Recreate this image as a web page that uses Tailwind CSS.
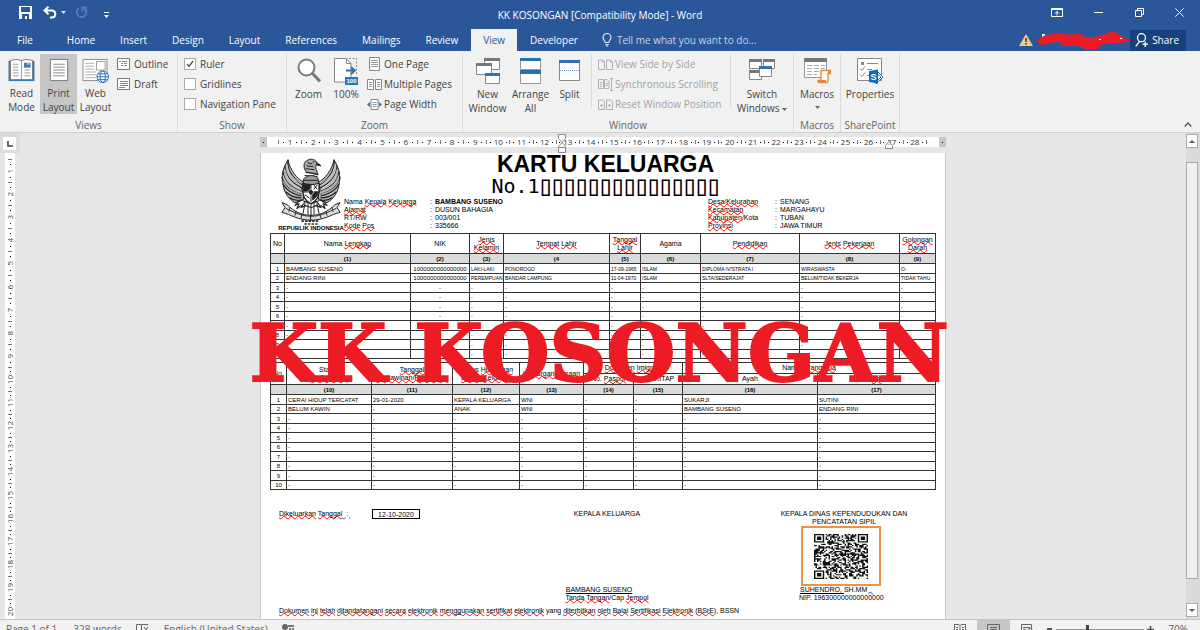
<!DOCTYPE html>
<html lang="en">
<head>
<meta charset="utf-8">
<meta name="viewport" content="width=device-width, initial-scale=1">
<title>KK KOSONGAN [Compatibility Mode] - Word</title>
<script src="https://cdn.jsdelivr.net/npm/@tailwindcss/browser@4"></script>
</head>
<body class="flex h-screen flex-col overflow-hidden bg-[#e6e6e6] font-['Open_Sans','Noto_Sans',sans-serif] text-[10px] leading-[14px] text-[#444]">

<!-- Title bar -->
<header class="shrink-0 bg-[#2a579a] text-white">
  <div class="grid h-[29px] grid-cols-[1fr_auto_1fr] items-center">
    <div class="flex items-center gap-[11px] pb-1 pl-[19px]">
      <button type="button" aria-label="Save"><svg class="block h-[13px] w-[13px]" viewBox="0 0 13 13"><path d="M0 0h13v13H0z" fill="#fff"/><path d="M2 1h9v5H2zM3 8h7v5H8v-3H6v3H3z" fill="#2a579a"/></svg></button>
      <div class="flex items-center gap-1">
        <button type="button" aria-label="Undo"><svg class="block h-[13px] w-[14px]" viewBox="0 0 14 13" fill="none" stroke="#fff" stroke-width="2"><path d="M5.500.700 1.500 4.500 5.500 8.300M2 4.500h6.500c5 0 5 7 0 7H7"/></svg></button>
        <button type="button" aria-label="Undo list"><svg class="block h-[3px] w-[5px]" viewBox="0 0 5 3"><path d="M0 0h5L2.500 3z" fill="#dbe4f2"/></svg></button>
        <button type="button" aria-label="Redo" class="ml-[5px]"><svg class="block h-[13px] w-[13px]" viewBox="0 0 13 13" fill="none" stroke="#5b7db3" stroke-width="1.800"><path d="M4 2.200A4.800 4.800 0 1 0 9.500 2.500M7.500 5.500V1.500h4"/></svg></button>
      </div>
      <button type="button" aria-label="Customize toolbar" class="mt-1 ml-[5px]"><svg class="block h-[6px] w-[5px]" viewBox="0 0 5 6"><path d="M0 0h5v1H0zM0 3h5L2.500 6z" fill="#fff"/></svg></button>
    </div>
    <h1>KK KOSONGAN [Compatibility Mode] - Word</h1>
    <div class="flex items-center justify-end pr-4 pb-1">
      <button type="button" aria-label="Ribbon display options"><svg class="block h-[9px] w-3" viewBox="0 0 12 9"><path d="M.500.500h11v8H.500zM.500 1.500h11M6 7.500v-4M4 5.500 6 3.500l2 2" fill="none" stroke="#fff"/></svg></button>
      <button type="button" aria-label="Minimize" class="ml-[31px]"><svg class="block h-[9px] w-[9px]" viewBox="0 0 9 9"><path d="M0 4.500h9" stroke="#fff"/></svg></button>
      <button type="button" aria-label="Restore" class="ml-8"><svg class="block h-[9px] w-[9px]" viewBox="0 0 9 9" fill="none" stroke="#fff"><path d="M.500 2.500h6v6h-6zM2.500 2.500v-2h6v6h-2"/></svg></button>
      <button type="button" aria-label="Close" class="ml-[31px]"><svg class="block h-[9px] w-[9px]" viewBox="0 0 9 9"><path d="m.300.300 8.400 8.400m0-8.400L.300 8.700" stroke="#fff"/></svg></button>
    </div>
  </div>
  <div class="flex h-[22px] items-end justify-between">
    <nav class="flex items-end" aria-label="Ribbon tabs">
      <a href="#" class="mr-[10px] py-1 pr-3 pl-[17px]">File</a>
      <a href="#" class="py-1 pr-[13px] pl-3">Home</a>
      <a href="#" class="py-1 pr-[13px] pl-3">Insert</a>
      <a href="#" class="py-1 pr-[13px] pl-3">Design</a>
      <a href="#" class="py-1 pr-[13px] pl-3">Layout</a>
      <a href="#" class="py-1 pr-[13px] pl-3">References</a>
      <a href="#" class="py-1 pr-[13px] pl-3">Mailings</a>
      <a href="#" class="py-1 pr-[13px] pl-3">Review</a>
      <a href="#" class="bg-[#f1f1f1] px-3 py-1 text-[#2a579a]" aria-current="page">View</a>
      <a href="#" class="py-1 pr-3 pl-[13px]">Developer</a>
      <label class="ml-3 flex items-center gap-[5px] py-1">
        <svg class="h-[14px] w-[10px]" viewBox="0 0 10 14" fill="none" stroke="#dfe8f5" stroke-width="1.200"><path d="M3.200 9.500C3 7.500 1 6.800 1 4.500a4 4 0 0 1 8 0c0 2.300-2 3-2.200 5zM3.200 11.500h3.600M3.800 13h2.400"/></svg>
        <input type="text" aria-label="Tell me" placeholder="Tell me what you want to do..." class="h-[14px] w-[170px] bg-transparent placeholder-[#c3d1e8] outline-none">
      </label>
    </nav>
    <div class="flex h-[22px] items-center">
      <svg class="h-3 w-[14px]" viewBox="0 0 14 12"><path d="M7 0 14 12H0z" fill="#f0c987"/><path d="M6.200 4h1.600v4H6.200zM6.200 9h1.600v1.500H6.200z" fill="#444"/></svg>
      <svg class="ml-1 h-[19px] w-[93px]" viewBox="0 0 93 19"><path d="M5 3h3v4H5z" fill="#fff"/><path d="M1 9 7 4.500 22 2l8 1.500L43 3l3 2 6 2 10-2 3-1 6-2 4-2 6 2 2 1-3 1 6 1-1 2 7 1v3l-10 1H72l-4 1-5 1-2 4-11 1-8-4H27l-4-2 5-1-7-1-10 1-5 2-5-2z" fill="#ed1c24"/><path d="M62 8h2v1h-2zM83 7h2v1h-2z" fill="#fff"/></svg>
      <button type="button" class="mr-[14px] flex h-[21px] items-center gap-1 bg-[#18407b] pr-[7px] pl-[5px]">
        <svg class="h-[14px] w-[13px]" viewBox="0 0 13 14" fill="none" stroke="#fff" stroke-width="1.300"><circle cx="6.500" cy="4.700" r="4"/><path d="M.700 13.500 4.500 8.300M10.200 8.500v5.500M7.500 11.200H13"/></svg>Share</button>
    </div>
  </div>
</header>

<!-- Ribbon -->
<section aria-label="View ribbon" class="flex h-[82px] shrink-0 border-b border-[#cfcfcf] bg-[#f1f1f1] pt-[3px]">
  <div class="flex w-[178px] flex-col justify-between border-r border-[#dadada]">
    <div class="flex pl-[3px]">
      <button type="button" class="flex h-[60px] w-[37px] flex-col items-center gap-[3px] pt-1">
        <svg class="h-[26px] w-[27px]" viewBox="0 0 27 26"><path d="M0 3h27v21H0z" fill="#2b7cc4"/><path d="M2 2.500q6-2 11.500 0 5.500-2 11.500 0v20H2z" fill="#fff" stroke="#777"/><path d="M13.500 2.500v20M4.500 6.500h6M4.500 9.500h6M4.500 12.500h6M4.500 15.500h6M4.500 18.500h6M16.500 12.500h6M16.500 15.500h6M16.500 18.500h6" stroke="#999" fill="none"/><path d="M16 5h7v5h-7z" fill="#2b7cc4"/><path d="M19 5h3v2h-3z" fill="#f0b070"/></svg>
        <span>Read<br>Mode</span></button>
      <button type="button" class="flex h-[60px] w-[37px] flex-col items-center gap-[3px] bg-[#c6c6c6] pt-1">
        <svg class="h-[26px] w-5" viewBox="0 0 20 26"><path d="M1 1.500h18v22H1z" fill="#fff" stroke="#777"/><path d="M4 6.500h12M4 9.500h12M4 12.500h12M4 15.500h12M4 18.500h12" stroke="#888"/></svg>
        <span>Print<br>Layout</span></button>
      <button type="button" class="flex h-[60px] w-[37px] flex-col items-center gap-[3px] pt-1">
        <svg class="h-[26px] w-7" viewBox="0 0 28 26" fill="none"><path d="M.500 1.500h25v22H.500z" fill="#fff" stroke="#888"/><path d="M14.500 3.500h9v9h-9z" stroke="#999"/><path d="M3 5.500h9M3 8.500h9M3 11.500h9M3 14.500h11M3 17.500h11M3 20.500h11" stroke="#aaa"/><g stroke="#2b6cb4"><circle cx="21" cy="19.500" r="6" fill="#fff"/><ellipse cx="21" cy="19.500" rx="2.700" ry="6"/><path d="M15 19.500h12M16 16.500h10M16 22.500h10"/></g></svg>
        <span>Web<br>Layout</span></button>
      <div class="ml-[3px] flex flex-col">
        <button type="button" class="flex h-5 items-center gap-1"><svg class="h-3 w-[13px]" viewBox="0 0 13 12"><path d="M.500.500h12v11H.500z" fill="#fff" stroke="#777"/><path d="M2 3.500h2M5 3.500h5M4 5.500h2M7 5.500h3M4 7.500h2M7 7.500h3" stroke="#888"/></svg>Outline</button>
        <button type="button" class="flex h-5 items-center gap-1"><svg class="h-3 w-[13px]" viewBox="0 0 13 12"><path d="M.500.500h12v11H.500z" fill="#fff" stroke="#777"/><path d="M3 3.500h8M3 5.500h8M3 7.500h8M2 9.500h6" stroke="#888"/></svg>Draft</button>
      </div>
    </div>
    <p class="text-center text-[#666]">Views</p>
  </div>
  <div class="flex w-[109px] flex-col justify-between border-r border-[#dadada]">
    <div class="flex flex-col pl-[6px]">
      <label class="flex h-5 items-center gap-1"><span class="relative flex"><input type="checkbox" checked class="peer h-3 w-3 appearance-none border border-[#ababab] bg-white"><svg class="pointer-events-none absolute inset-0 hidden h-3 w-3 peer-checked:block" viewBox="0 0 12 12"><path d="M3 6l2 2.500L9 3" fill="none" stroke="#555" stroke-width="1.300"/></svg></span>Ruler</label>
      <label class="flex h-5 items-center gap-1"><input type="checkbox" class="h-3 w-3 appearance-none border border-[#ababab] bg-white">Gridlines</label>
      <label class="flex h-5 items-center gap-1 whitespace-nowrap"><input type="checkbox" class="h-3 w-3 appearance-none border border-[#ababab] bg-white">Navigation Pane</label>
    </div>
    <p class="text-center text-[#666]">Show</p>
  </div>
  <div class="flex w-[176px] flex-col justify-between border-r border-[#dadada]">
    <div class="flex">
      <button type="button" class="flex w-[43px] flex-col items-center gap-[3px] pt-1">
        <svg class="h-[26px] w-6" viewBox="0 0 24 26" fill="none" stroke="#7a7a7a"><circle cx="9.500" cy="9.500" r="8" fill="#fff" stroke-width="2"/><path d="m15.500 15.500 7.500 8" stroke-width="3"/></svg>
        <span>Zoom</span></button>
      <button type="button" class="flex w-[32px] flex-col items-center gap-[3px] pt-1">
        <svg class="h-[27px] w-6" viewBox="0 0 24 27" fill="none"><path d="M.500.500h12l4.500 5v18.500H.500z" fill="#fff" stroke="#888"/><path d="M12.500.500v5H17" stroke="#888"/><path d="M15 .500h7.500v16" stroke="#888" stroke-dasharray="2 1.500"/><path d="M12 12.500h8M17 9l4 3.500-4 3.500" stroke="#2b6cb4" stroke-width="1.800"/><path d="M11 19h13v8H11z" fill="#2b78b8"/><text x="17.500" y="25.300" text-anchor="middle" font-size="6" font-weight="700" fill="#fff" font-family="Liberation Sans">100</text></svg>
        <span class="-mt-px">100%</span></button>
      <div class="ml-[5px] flex flex-col">
        <button type="button" class="flex h-5 items-center gap-1"><svg class="ml-[2px] h-[14px] w-[11px]" viewBox="0 0 11 14"><path d="M.500.500h10v13H.500z" fill="#fff" stroke="#888"/><path d="M2 3.500h7M2 5.500h7M2 7.500h7M2 9.500h7" stroke="#999"/></svg>One Page</button>
        <button type="button" class="flex h-5 items-center gap-[2px]"><svg class="h-[11px] w-[15px]" viewBox="0 0 15 11"><path d="M.500.500h6v10h-6zM8.500.500h6v10h-6z" fill="#fff" stroke="#888"/><path d="M2 3.500h3M2 5.500h3M2 7.500h3M10 3.500h3M10 5.500h3M10 7.500h3" stroke="#999"/></svg>Multiple Pages</button>
        <button type="button" class="flex h-5 items-center gap-[2px]"><svg class="h-[11px] w-[15px]" viewBox="0 0 15 11"><path d="M4 .500h7v10H4z" fill="#fff" stroke="#888"/><path d="M5.500 3.500h4M5.500 5.500h4M5.500 7.500h4" stroke="#999"/><path d="M0 5.500 3 3v5zM15 5.500 12 3v5z" fill="#2b78b8"/></svg>Page Width</button>
      </div>
    </div>
    <p class="text-center text-[#666]">Zoom</p>
  </div>
  <div class="flex w-[331px] flex-col justify-between border-r border-[#dadada]">
    <div class="flex">
      <button type="button" class="ml-[3px] flex w-[43px] flex-col items-center gap-[3px] pt-1">
        <svg class="h-[26px] w-6" viewBox="0 0 24 26" fill="#fff" stroke="#888"><path d="M8.500.500h15v11h-15z"/><path d="M8 0h16v3H8z" fill="#777" stroke="none"/><path d="M.500 5.500h15v11H.500z"/><path d="M0 5h16v3H0z" fill="#777" stroke="none"/><path d="M9.500 15.500h14v10h-14z"/><path d="M9 15h15v3H9z" fill="#2b78b8" stroke="none"/></svg>
        <span>New<br>Window</span></button>
      <button type="button" class="flex w-[43px] flex-col items-center gap-[3px] pt-1">
        <svg class="h-[26px] w-[21px]" viewBox="0 0 21 26" fill="#fff" stroke="#999"><path d="M.500.500h20v11H.500zM.500 13.500h20v12H.500z"/><path d="M0 0h21v3H0zM0 12h21v4H0z" fill="#2b6fae" stroke="none"/></svg>
        <span>Arrange<br>All</span></button>
      <button type="button" class="flex w-[35px] flex-col items-center gap-[3px] pt-1">
        <svg class="h-[26px] w-[21px]" viewBox="0 0 21 26"><path d="M.500 2.500h20v20H.500z" fill="#fff" stroke="#888"/><path d="M0 2h21v3H0z" fill="#2b6fae"/><path d="M1 12.500h19" stroke="#6a9bd0" stroke-dasharray="1 1"/></svg>
        <span>Split</span></button>
      <div class="ml-1 h-[54px] border-l border-[#dadada]"></div>
      <div class="ml-[6px] flex flex-col whitespace-nowrap text-[#a3a3a3]">
        <button type="button" class="flex h-5 items-center gap-[2px]"><svg class="h-[11px] w-[15px]" viewBox="0 0 15 11" fill="none" stroke="#b5adb5"><path d="M.500 1v9.500h6V3L4.500 1zM8.500 1v9.500h6V3l-2-2zM4.500 1v2h2M12.500 1v2h2"/></svg>View Side by Side</button>
        <button type="button" class="flex h-5 items-center gap-[2px]"><svg class="h-[13px] w-[15px]" viewBox="0 0 15 13" fill="none" stroke="#b5adb5"><path d="M.500 1.500v9h5v-9zM6.500 1.500v9H11v-7l-2-2zM2 4.500h2M2 6.500h2M2 8.500h2M7.500 5.500H10M7.500 7.500H10M13.500.500v12M12 .500h3M12 12.500h3"/></svg>Synchronous Scrolling</button>
        <button type="button" class="flex h-5 items-center gap-[2px]"><svg class="h-[11px] w-[15px]" viewBox="0 0 15 11" fill="none" stroke="#b5adb5"><path d="M.500 1v9.500h6V3L4.500 1zM8.500 1v9.500h6V3l-2-2zM2 6.500h3M3.500 5v3M10 6.500h3M11.500 5v3"/></svg>Reset Window Position</button>
      </div>
      <div class="ml-auto h-[54px] border-l border-[#dadada]"></div>
      <button type="button" class="flex w-[62px] flex-col items-center gap-[3px] pt-1">
        <svg class="h-[26px] w-[26px]" viewBox="0 0 26 26" fill="#fff" stroke="#888"><path d="M.500 1.500h12v9H.500zM14.500 1.500h11v9h-11zM.500 12.500h12v9H.500z"/><path d="M0 1h13v3H0zM14 1h12v3H14zM0 12h10v3H0z" fill="#777" stroke="none"/><path d="M10.500 8.500h12v10h-12z"/><path d="M10 8h13v3H10z" fill="#2b78b8" stroke="none"/></svg>
        <span class="whitespace-nowrap">Switch<br>Windows <svg class="inline h-[3px] w-[5px] align-middle" viewBox="0 0 5 3"><path d="M0 0h5L2.500 3z" fill="#666"/></svg></span></button>
    </div>
    <p class="text-center text-[#666]">Window</p>
  </div>
  <div class="flex w-[47px] flex-col justify-between border-r border-[#dadada]">
    <button type="button" class="flex flex-col items-center gap-[3px] pt-1">
      <svg class="h-[26px] w-[27px]" viewBox="0 0 27 26"><path d="M.500.500h22v19H.500z" fill="#fff" stroke="#999"/><path d="M0 0h23v4H0z" fill="#777"/><path d="M3 7.500h5M10 7.500h5M17 7.500h4M3 10.500h5M10 10.500h5M17 10.500h4M3 13.500h5M10 13.500h5M3 16.500h5M10 16.500h3" stroke="#aaa"/><path d="M17 12.500h9.500v3H24v7q0 2-2 2h-6.500q-1.500 0-1.500-2h3z" fill="#fff" stroke="#e8873a" stroke-width="1.400"/><path d="M14 22h8v3h-7zM24 12h3v3h-3z" fill="#e8873a"/></svg>
      <span>Macros</span>
      <svg class="mt-[2px] h-[3px] w-[5px]" viewBox="0 0 5 3"><path d="M0 0h5L2.500 3z" fill="#666"/></svg></button>
    <p class="text-center text-[#666]">Macros</p>
  </div>
  <div class="flex w-[59px] flex-col justify-between border-r border-[#dadada]">
    <button type="button" class="flex flex-col items-center gap-[3px] pt-1">
      <svg class="h-[26px] w-[26px]" viewBox="0 0 26 26"><path d="M.500.500h24v22H.500z" fill="#fff" stroke="#888"/><path d="M4 4h3v3H4z" fill="#888"/><path d="M10 5.500h11M10 11.500h5M10 17.500h3M3 10.500l2 2 3-4M3 16.500l2 2 3-4" fill="none" stroke="#888"/><path d="m19 12 7 7-7 7z" fill="#fff" stroke="#2b78c4"/><path d="M21 16.500 24 19l-3 3" fill="none" stroke="#2b78c4"/><path d="m12 13 9-1.500v14L12 24z" fill="#0f6cbd"/><text x="16.500" y="22" text-anchor="middle" font-size="9" font-weight="700" fill="#fff" font-family="Liberation Sans">S</text></svg>
      <span>Properties</span></button>
    <p class="text-center text-[#666]">SharePoint</p>
  </div>
  <button type="button" aria-label="Collapse the ribbon" class="mt-auto mr-2 mb-[5px] ml-auto"><svg class="block h-[5px] w-2" viewBox="0 0 8 5"><path d="m.700 4.500 3.300-3.500 3.300 3.500" fill="none" stroke="#555" stroke-width="1.300"/></svg></button>
</section>

<!-- Workspace -->
<main class="flex min-h-0 flex-1">
  <div class="flex w-5 shrink-0 flex-col overflow-hidden">
    <button type="button" aria-label="Tab selector" class="h-5 w-5 shrink-0 bg-[#dcdcdc] p-[3px]"><svg class="block h-[13px] w-[13px]" viewBox="0 0 13 13"><path d="M0 0h13v13H0z" fill="#fff"/><path d="M5 4v5h5" fill="none" stroke="#444" stroke-width="1.600"/></svg></button>
    <div id="vruler" class="ml-[5px] w-[10px] flex-1 overflow-hidden bg-white pt-[6px] text-[8px] leading-[10px] text-[#444]"></div>
  </div>

  <div class="flex min-w-0 flex-1 flex-col items-center">
    <div class="relative flex h-5 w-[686px] shrink-0 items-start pt-1">
      <span class="flex h-[10px] w-[7px] items-center justify-center bg-[#c6c6c6]"><i class="h-px w-px bg-black"></i></span>
      <div id="hruler" class="flex h-[10px] flex-1 items-center bg-white pr-3 pl-[11px] text-[8px] leading-[10px] text-[#333]"></div>
      <span class="flex h-[10px] w-[7px] items-center justify-center bg-[#c6c6c6]"><i class="h-px w-px bg-black"></i></span>
      <svg class="absolute top-px left-[298px] h-[19px] w-[8px]" viewBox="0 0 8 19"><path d="M.500.500h7v4L4 8.500l3.500 4v6h-7v-6L4 8.500.500 4.500zM.500 13.500h7" fill="#fff" fill-opacity=".7" stroke="#888"/></svg>
      <svg class="absolute top-2 left-[625px] h-2 w-[8px]" viewBox="0 0 8 8"><path d="M.500 7.500v-3L4 .500l3.500 4v3z" fill="#fff" fill-opacity=".7" stroke="#888"/></svg>
    </div>

    <!-- Document page; misspelt words carry the checker's wavy line -->
    <article class="relative min-h-0 w-[686px] flex-1 border-x border-[#c6c6c6] bg-white pr-[10px] pl-[9px] font-['Liberation_Sans',Arial,sans-serif] text-[7px] leading-[8px] text-black [&_u]:underline-offset-[-1px] [&_u]:decoration-[#f00] [&_u]:decoration-wavy [&_u]:decoration-1 [&_u]:[text-decoration-skip-ink:none]">
      <div class="grid h-20 grid-cols-[74px_364px_1fr] grid-rows-[45px_35px]">
        <figure class="col-start-1 row-span-2 row-start-1 flex flex-col items-center pt-[5px] pl-2">
          <svg class="h-[68px] w-[62px] shrink-0" viewBox="0 0 62 70" preserveAspectRatio="none" fill="none" stroke="#222" stroke-linecap="round" stroke-linejoin="round">
            <defs><g id="wing">
              <path d="M24 25C17 22 10 12 8 2 3 10 1 19 3 27c1 8 5 15 12 19l8-3z" fill="#bbb"/>
              <path d="M8 2c-1 9 3 18 15 26M5 8c0 9 5 17 17 23M3 14c1 9 6 16 18 20M2 20c2 9 8 14 19 17M3 27c4 7 9 10 18 12M6 35c4 4 9 6 15 6M10 41c4 3 8 3 12 2" stroke-width="1.200"/>
              <path d="M7 7c1 8 5 14 14 19M5 12c2 9 6 14 15 19M3 18c3 8 8 13 17 16M3 24c4 8 9 10 17 13" stroke="#fff" stroke-width=".6"/>
              <path d="M22 43c-3 2-6 3-7 6l4-2-2 5 4-3M25 45l-4 6 5-2" stroke-width="1.200"/>
              <path d="M31 59c-10 0-17-4-24-11l-5-2 3 5-3 5c9 2 15 8 29 8z" fill="#ddd"/>
              <path d="M6 52c7 3 14 8 25 8M10 51l-1 4M16 55l-1 4M22 58l-1 4" stroke-width=".9"/>
            </g></defs>
            <use href="#wing"/><use href="#wing" transform="matrix(-1 0 0 1 62 0)"/>
            <path d="M26 14c-3-4-3-10 2-12 4-2 8 0 9 3l4 3-5-1c-1 4 1 6 2 10z" fill="#aaa"/>
            <path d="m36 5 5 3-4-1M33 4h1M27 8l6 1M26 11l8 1M26 15l10 1M25 18l12 1M28 5l4 1" stroke-width="1"/>
            <path d="M24 21c4-4 11-4 14 0l2 12-5 13h-8l-5-13z" fill="#999"/>
            <path d="M24 23h14M23 44l8 3 8-3M25 49l6 2 6-2M25 47l-2 10M31 47v12M37 47l2 10M28 47v11M34 47v11" stroke-width="1"/>
            <path d="M23 26q8 3 16 0v9q0 8-8 12-8-4-8-12z" fill="#fff" stroke-width="1.200"/>
            <path d="M24 27h6v7h-6zM33 35h5q0 5-5 8z" fill="#222"/>
            <path d="M23 35h16M31 27v18M34 28l3 4M37 28l-3 4M25 38l4 3" stroke-width="1"/>
            <path d="m31 32 3 3-3 4-3-4z" fill="#222" stroke="#fff" stroke-width=".7"/>
            <path d="M22 65h18M25 68h12" stroke-width="1.600" stroke-dasharray="1.200 2.400"/>
          </svg>
          <figcaption class="-mt-px text-[6px] leading-[6px] font-bold whitespace-nowrap">REPUBLIK INDONESIA</figcaption>
        </figure>
        <div class="col-span-3 col-start-1 row-start-1 flex flex-col items-center pl-[6px]">
          <h2 class="text-[23px] leading-[22px] font-bold">KARTU KELUARGA</h2>
          <p class="flex h-[22px] items-center font-['DejaVu_Sans_Mono',monospace] text-[20px] leading-[22px]">No.1<span id="cardno" class="flex text-[28px] leading-[22px]"></span></p>
        </div>
        <dl class="col-start-2 row-start-2 grid auto-rows-[8px] grid-cols-[86px_5px_1fr]">
          <dt>Nama <u>Kepala</u> <u>Keluarga</u></dt><dd>:</dd><dd class="font-bold">BAMBANG SUSENO</dd>
          <dt><u>Alamat</u></dt><dd>:</dd><dd>DUSUN BAHAGIA</dd>
          <dt>RT/RW</dt><dd>:</dd><dd>003/001</dd>
          <dt><u>Kode</u> <u>Pos</u></dt><dd>:</dd><dd>335666</dd>
        </dl>
        <dl class="col-start-3 row-start-2 grid auto-rows-[8px] grid-cols-[67px_5px_1fr]">
          <dt><u>Desa/Kelurahan</u></dt><dd>:</dd><dd>SENANG</dd>
          <dt><u>Kecamatan</u></dt><dd>:</dd><dd>MARGAHAYU</dd>
          <dt><u>Kabupaten</u>/Kota</dt><dd>:</dd><dd>TUBAN</dd>
          <dt><u>Provinsi</u></dt><dd>:</dd><dd>JAWA TIMUR</dd>
        </dl>
      </div>

      <table id="t1" class="w-full table-fixed border-collapse text-center [&_td]:overflow-hidden [&_td]:border [&_td]:border-[#333] [&_td]:p-0 [&_td]:whitespace-nowrap [&_th]:border [&_th]:border-[#333] [&_th]:p-0">
        <colgroup><col class="w-[14px]"><col class="w-[126px]"><col class="w-[59px]"><col class="w-[34px]"><col class="w-[106px]"><col class="w-[31px]"><col class="w-[60px]"><col class="w-[99px]"><col class="w-[100px]"><col class="w-[36px]"></colgroup>
        <thead>
          <tr class="h-5 [&_th]:font-normal"><th>No</th><th>Nama <u>Lengkap</u></th><th>NIK</th><th><u>Jenis</u> <u>Kelamin</u></th><th><u>Tempat</u> <u>Lahir</u></th><th><u>Tanggal</u> <u>Lahir</u></th><th>Agama</th><th><u>Pendidikan</u></th><th><u>Jenis</u> <u>Pekerjaan</u></th><th><u>Golongan</u> <u>Darah</u></th></tr>
          <tr class="h-[10px] bg-[#d9dbda] text-[6px]"><th></th><th>(1)</th><th>(2)</th><th>(3)</th><th>(4</th><th>(5)</th><th>(6)</th><th>(7)</th><th>(8)</th><th>(9)</th></tr>
        </thead>
        <tbody class="text-[6px] leading-[8px]"></tbody>
      </table>

      <table id="t2" class="mt-[3px] w-full table-fixed border-collapse text-center [&_td]:overflow-hidden [&_td]:border [&_td]:border-[#333] [&_td]:p-0 [&_td]:whitespace-nowrap [&_th]:border [&_th]:border-[#333] [&_th]:p-0">
        <colgroup><col class="w-[16px]"><col class="w-[85px]"><col class="w-[81px]"><col class="w-[67px]"><col class="w-[64px]"><col class="w-[50px]"><col class="w-[49px]"><col class="w-[135px]"><col class="w-[118px]"></colgroup>
        <thead>
          <tr class="h-[11px] [&_th]:font-normal"><th rowspan="2">No.</th><th rowspan="2">Status<br><u>Perkawinan</u></th><th rowspan="2"><u>Tanggal</u><br><u>Perkawinan/Perceraian</u></th><th rowspan="2">Status <u>Hubungan</u><br><u>Dalam</u> <u>Keluarga</u></th><th rowspan="2"><u>Kewarganegaraan</u></th><th colspan="2"><u>Dokumen</u> <u>Imigrasi</u></th><th colspan="2">Nama <u>Orang</u> <u>Tua</u></th></tr>
          <tr class="h-[11px] [&_th]:font-normal"><th>No. <u>Paspor</u></th><th>No. KITAP</th><th>Ayah</th><th><u>Ibu</u></th></tr>
          <tr class="h-[10px] bg-[#d9dbda] text-[6px]"><th></th><th>(10)</th><th>(11)</th><th>(12)</th><th>(13)</th><th>(14)</th><th>(15)</th><th>(16)</th><th>(17)</th></tr>
        </thead>
        <tbody class="text-[6px] leading-[8px]"></tbody>
      </table>

      <div class="mt-5 flex pl-[9px]">
        <div class="flex w-[273px] items-start">
          <label for="issued" class="w-[93px]"><u>Dikeluarkan</u> <u>Tanggal</u><span class="underline decoration-blue-600 decoration-wavy decoration-1 underline-offset-[-1px]">&nbsp; :&nbsp;</span></label>
          <input id="issued" type="text" value="12-10-2020" class="-mt-px h-[10px] w-12 border border-black text-center leading-[8px]">
        </div>
        <div class="flex w-[110px] flex-col text-center whitespace-nowrap">
          <p>KEPALA KELUARGA</p>
          <p class="mt-auto pr-4 underline">BAMBANG SUSENO</p>
          <p><u>Tanda</u> <u>Tangan</u>/Cap <u>Jempol</u></p>
        </div>
        <div class="mr-6 ml-auto flex w-[134px] flex-col whitespace-nowrap">
          <p class="text-center">KEPALA DINAS KEPENDUDUKAN DAN<br>PENCATATAN SIPIL</p>
          <div class="ml-6 flex h-[60px] w-20 items-center justify-center border-2 border-[#f19143]">
            <svg id="qr" class="h-[45px] w-[54px]" viewBox="0 0 37 37" preserveAspectRatio="none" aria-label="QR code"></svg>
          </div>
          <p class="ml-[23px]"><span class="underline">SUHENDRO, </span><span class="underline decoration-blue-700 decoration-wavy decoration-1 underline-offset-[-1px]">SH.MM&nbsp; &nbsp;</span></p>
          <p class="ml-[22px]">NIP. 196300000000000000</p>
        </div>
      </div>
      <p class="mt-[5px] pl-[9px] whitespace-nowrap"><u>Dokumen</u> <u>ini</u> <u>telah</u> <u>ditandatangani</u> <u>secara</u> <u>elektronik</u> <u>menggunakan</u> <u>sertifikat</u> <u>elektronik</u> yang <u>diterbitkan</u> <u>oleh</u> <u>Balai</u> <u>Sertifikasi</u> <u>Elektronik</u> (<u>BSrE</u>), BSSN</p>

      <!-- Banner lettering over the tables -->
      <strong class="absolute top-[161px] left-[338px] -translate-x-1/2 font-['DejaVu_Serif',serif] text-[79px] leading-[80px] font-bold whitespace-nowrap text-[#ed1c24] [-webkit-text-stroke:2px_#ed1c24]">KK KOSONGAN</strong>
    </article>
  </div>

  <div class="flex w-[14px] shrink-0 flex-col bg-[#dadada] pt-px pr-[2px] pb-[2px]">
    <button type="button" aria-label="Scroll up" class="flex h-[14px] shrink-0 items-center justify-center border border-[#ababab] bg-white"><svg class="h-[3px] w-[6px]" viewBox="0 0 6 3"><path d="M0 3h6L3 0z" fill="#555"/></svg></button>
    <div class="mt-[14px] mb-[24px] flex-1 border border-[#ababab] bg-[#f0f0f0]"></div>
    <button type="button" aria-label="Scroll down" class="flex h-[14px] shrink-0 items-center justify-center border border-[#ababab] bg-white"><svg class="h-[3px] w-[6px]" viewBox="0 0 6 3"><path d="M0 0h6L3 3z" fill="#555"/></svg></button>
  </div>
</main>

<!-- Status bar, running off the lower window edge -->
<footer class="h-[11px] shrink-0 overflow-hidden border-t border-[#c6c6c6] bg-[#f1f1f1] text-[#666]">
  <div class="flex h-[18px] items-center">
    <span class="ml-[6px]">Page 1 of 1</span>
    <span class="ml-4">328 words</span>
    <svg class="ml-[14px] h-3 w-[13px]" viewBox="0 0 13 12" fill="none" stroke="#666"><path d="M.500 1.500h5v9h-5zM6 1.500h6M8 4l4 5m0-5L8 9"/></svg>
    <span class="ml-[15px]">English (United States)</span>
    <svg class="ml-[14px] h-3 w-3" viewBox="0 0 12 12"><circle cx="3" cy="4" r="3" fill="#666"/><path d="M6 2h6v2H6zM7 5h2v2H7zM10 5h2v6H2V9h8z" fill="#777"/></svg>
    <div class="ml-auto flex h-full items-center">
      <button type="button" aria-label="Read mode" class="flex h-full w-[34px] items-center justify-center"><svg class="h-3 w-3" viewBox="0 0 12 12" fill="none" stroke="#666"><path d="M.500 1.500H5l1 1 1-1h4.500v8H7l-1 1-1-1H.500zM6 2v8M2 4.500h2M2 6.500h2M8 4.500h2M8 6.500h2"/></svg></button>
      <button type="button" aria-label="Print layout" class="flex h-full w-[33px] items-center justify-center bg-[#c6c6c6]"><svg class="h-3 w-[13px]" viewBox="0 0 13 12" fill="none" stroke="#666"><path d="M.500 1.500h12v9H.500zM3 4.500h7M3 6.500h7M3 8.500h7"/></svg></button>
      <button type="button" aria-label="Web layout" class="flex h-full w-[34px] items-center justify-center"><svg class="h-3 w-3" viewBox="0 0 12 12" fill="none" stroke="#666"><path d="M.500 1.500h10v9H.500zM2 4.500h7M2 6.500h3"/><circle cx="9" cy="8" r="2.500" fill="#f1f1f1"/></svg></button>
      <button type="button" aria-label="Zoom out" class="ml-[3px] h-[2px] w-[5px] bg-[#555]"></button>
      <input type="range" aria-label="Zoom" min="10" max="190" value="72" class="ml-1 h-3 w-[88px] appearance-none bg-[linear-gradient(#999,#999)] bg-[length:100%_1px] bg-center bg-no-repeat [&::-webkit-slider-thumb]:h-[9px] [&::-webkit-slider-thumb]:w-[3px] [&::-webkit-slider-thumb]:appearance-none [&::-webkit-slider-thumb]:bg-[#444]">
      <button type="button" aria-label="Zoom in" class="ml-[3px]"><svg class="block h-[7px] w-[7px]" viewBox="0 0 7 7"><path d="M0 3.500h7M3.500 0v7" stroke="#555" stroke-width="1.600"/></svg></button>
      <span class="mr-3 ml-[14px]">70%</span>
    </div>
  </div>
</footer>

<script>
  // Rulers: half-unit tick, dot, number, dot for every centimetre
  const h = document.getElementById('hruler');
  for (let i = 1; i <= 28; i++) {
    h.insertAdjacentHTML('beforeend', `<span class="flex flex-1 items-center"><i class="h-1 w-px bg-[#777]"></i><span class="flex flex-1 items-center justify-evenly"><i class="h-px w-px bg-black"></i>${i}<i class="h-px w-px bg-black"></i></span></span>`);
  }
  h.insertAdjacentHTML('beforeend', '<i class="h-1 w-px bg-[#777]"></i>');
  const v = document.getElementById('vruler');
  for (let i = 1; i <= 20; i++) {
    v.insertAdjacentHTML('beforeend', `<span class="flex flex-col items-center ${i % 5 ? 'h-[23px]' : 'h-[24px]'}"><i class="h-px w-1 shrink-0 bg-[#777]"></i><span class="flex flex-1 flex-col items-center justify-evenly"><i class="h-px w-px bg-black"></i><b class="rotate-180 font-normal [writing-mode:vertical-rl]">${i}</b><i class="h-px w-px bg-black"></i></span></span>`);
  }

  // Blank digits of the card number, one cell each
  document.getElementById('cardno').innerHTML = '<span class="flex w-3 justify-center">▯</span>'.repeat(15);

  // Family members; missing entries print as a dash
  const fill = (id, cols, data, centred, small) => {
    const body = document.querySelector('#' + id + ' tbody');
    for (let r = 0; r < 10; r++) {
      const row = data[r] || Array(cols).fill('-');
      const tr = document.createElement('tr');
      tr.className = r % 2 ? 'h-[9px]' : 'h-[10px]';
      tr.innerHTML = `<td>${r + 1}</td>` + row.map((c, i) =>
        `<td class="${centred.includes(i) ? 'text-center' : 'text-left'}"><div class="${small.includes(i) ? 'px-px text-[5px] leading-[8px]' : 'px-px leading-[8px]'}">${c}</div></td>`).join('');
      body.append(tr);
    }
  };
  fill('t1', 9, [
    ['BAMBANG SUSENO', '1000000000000000', 'LAKI-LAKI', 'PONOROGO', '17-09-1965', 'ISLAM', 'DIPLOMA IV/STRATA I', 'WIRASWASTA', 'O-'],
    ['ENDANG RINI', '1000000000000000', 'PEREMPUAN', 'BANDAR LAMPUNG', '11-04-1970', 'ISLAM', 'SLTA/SEDERAJAT', 'BELUM/TIDAK BEKERJA', 'TIDAK TAHU']
  ], [1], [2, 3, 4, 5, 6, 7, 8]);
  fill('t2', 8, [
    ['CERAI HIDUP TERCATAT', '29-01-2020', 'KEPALA KELUARGA', 'WNI', '-', '-', 'SUKARJI', 'SUTINI'],
    ['BELUM KAWIN', '-', 'ANAK', 'WNI', '-', '-', 'BAMBANG SUSENO', 'ENDANG RINI']
  ], [], []);

  // QR pattern with three finder squares
  let seed = 7, d = '';
  const N = 37, finder = (x, y) => [[0, 0], [N - 7, 0], [0, N - 7]].find(([a, b]) => x >= a - 1 && x < a + 8 && y >= b - 1 && y < b + 8);
  for (let y = 0; y < N; y++) for (let x = 0; x < N; x++) {
    seed = (seed * 1103515245 + 12345) % 2147483648;
    const f = finder(x, y);
    let on = seed / 2147483648 < .52;
    if (f) {
      const m = Math.max(Math.abs(x - f[0] - 3), Math.abs(y - f[1] - 3));
      on = m === 3 || m <= 1;
    }
    if (on) d += `M${x} ${y}h1v1h-1z`;
  }
  document.getElementById('qr').innerHTML = `<path d="${d}" fill="#111"/>`;
</script>
</body>
</html>
